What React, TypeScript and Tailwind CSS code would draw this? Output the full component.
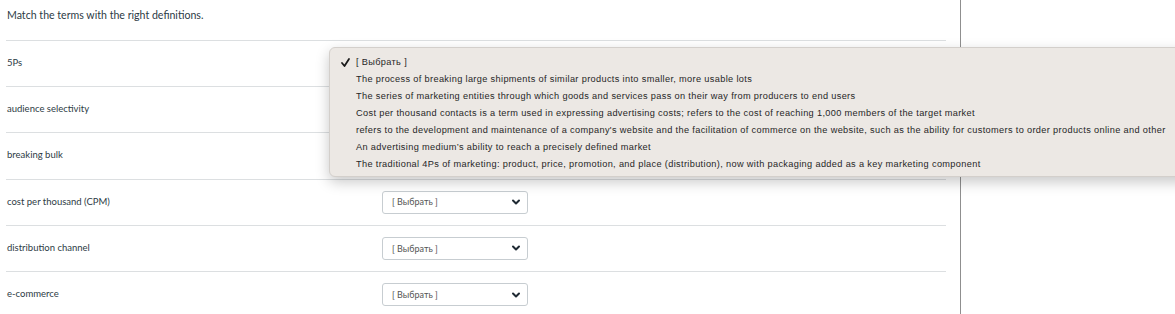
import { ChevronDown } from "lucide-react";

const terms = [
  "5Ps",
  "audience selectivity",
  "breaking bulk",
  "cost per thousand (CPM)",
  "distribution channel",
  "e-commerce",
];

const options = [
  "The process of breaking large shipments of similar products into smaller, more usable lots",
  "The series of marketing entities through which goods and services pass on their way from producers to end users",
  "Cost per thousand contacts is a term used in expressing advertising costs; refers to the cost of reaching 1,000 members of the target market",
  "refers to the development and maintenance of a company's website and the facilitation of commerce on the website, such as the ability for customers to order products online and other",
  "An advertising medium\u2019s ability to reach a precisely defined market",
  "The traditional 4Ps of marketing: product, price, promotion, and place (distribution), now with packaging added as a key marketing component",
];

function Select() {
  return (
    <div className="flex h-[23px] w-[146px] items-center justify-between rounded-[3px] border border-[#c7cdd1] bg-white pl-[9px] pr-[5px]">
      <span className="text-[9px] text-[#555]">[ Выбрать ]</span>
      <ChevronDown size={12} strokeWidth={4} className="text-[#1f2a33]" />
    </div>
  );
}

export default function App() {
  return (
    <div className="relative h-[314px] w-[1175px] overflow-hidden bg-white font-['Lato',sans-serif] text-[#2d3b45]">
      <div className="flex h-full">
        <main className="h-full w-[961px] border-r border-[#8f8f8f] pl-[6px] pr-[14px]">
          <div className="pl-[1px] pt-[8px] text-[10.6px] leading-[14px]">
            Match the terms with the right definitions.
          </div>
          <div className="mt-[18px]">
            {terms.map((t) => (
              <div
                key={t}
                className="flex h-[46.2px] items-center border-t border-[#dcdfe1] pl-[1px]"
              >
                <div className="w-[375px] pb-[1px] text-[9.5px]">{t}</div>
                <Select />
              </div>
            ))}
          </div>
        </main>
      </div>

      {/* открытый список первого селекта */}
      <div className="absolute left-[329px] top-[47px] h-[130px] w-[870px] rounded-[6px] border border-[#d3cfcb] bg-[#ece8e4] pt-[6px] font-['Liberation_Sans',sans-serif] text-[9.2px] leading-[17px] tracking-[0.35px] text-[#262626] shadow-[0_5px_14px_rgba(0,0,0,0.22)]">
        <div className="flex items-center">
          <svg width="26" height="17" viewBox="0 0 26 17" className="shrink-0">
            <path
              d="M12 9 L14.5 12 L19 5"
              fill="none"
              stroke="#1a1a1a"
              strokeWidth="1.8"
              strokeLinecap="round"
              strokeLinejoin="round"
            />
          </svg>
          <span>[ Выбрать ]</span>
        </div>
        {options.map((o) => (
          <div key={o} className="whitespace-nowrap pl-[26px]">
            {o}
          </div>
        ))}
      </div>
    </div>
  );
}
